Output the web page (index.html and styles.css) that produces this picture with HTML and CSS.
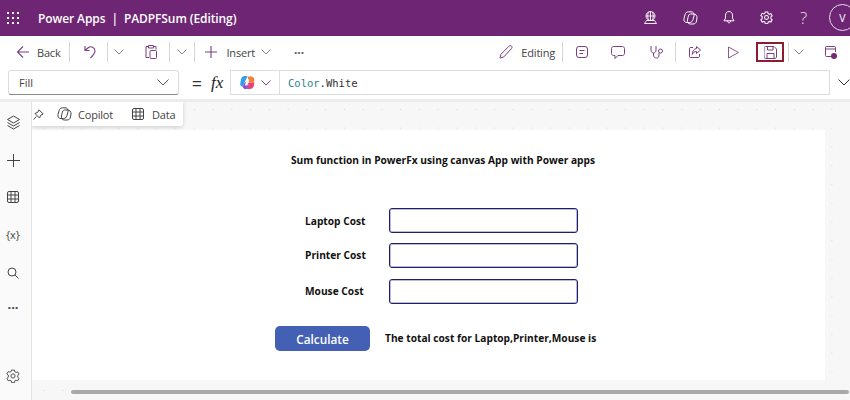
FILE: index.html
```html
<!DOCTYPE html>
<html lang="en">
<head>
    <meta charset="UTF-8">
    <title>Power Apps | PADPFSum (Editing)</title>
    <link rel="stylesheet" href="styles.css">
</head>
<body>
    <header class="topbar">
        <svg class="waffle" width="14" height="14" viewBox="0 0 14 14" fill="#fff">
            <rect x="1" y="1" width="2" height="2"/><rect x="6" y="1" width="2" height="2"/><rect x="11" y="1" width="2" height="2"/>
            <rect x="1" y="6" width="2" height="2"/><rect x="6" y="6" width="2" height="2"/><rect x="11" y="6" width="2" height="2"/>
            <rect x="1" y="11" width="2" height="2"/><rect x="6" y="11" width="2" height="2"/><rect x="11" y="11" width="2" height="2"/>
        </svg>
        <div class="app-title">Power Apps &nbsp;|&nbsp; PADPFSum (Editing)</div>
        <div class="top-icons">
            <svg class="globe-icon" width="13" height="13" viewBox="0 0 13 13" fill="none" stroke="#fff" stroke-width=".9"><circle cx="6.500" cy="5" r="4.500"/><path d="M2 5h9M6.500.5v9M4.500 1c-1 2-1 6 0 8M8.500 1c1 2 1 6 0 8M2.500 9.500h8l2 3H.5z"/></svg>
            <svg class="copilot-top" width="15" height="14" viewBox="0 0 15 14" fill="none" stroke="#fff"><path d="M5.500.8c-2 0-3 1.200-3.500 3L1 7.500c-.6 2.500.8 4 3 4h2.500c2 0 3-1.200 3.500-3l1-3.700C11.600 2.300 10 .8 8 .8z"/><path d="M7.500 3h2.800c2.500 0 4 1.800 3.700 4l-.5 3c-.3 2-1.700 3-3.500 3H7.500C5.500 13 4 11.500 4.500 9l.5-2.500C5.400 4.500 6 3 7.500 3z"/></svg>
            <svg class="bell-icon" width="12" height="13" viewBox="0 0 12 13" fill="none" stroke="#fff"><path d="M6 .5C3.800.5 2.500 2.200 2.500 4.200v3L1 9.800h10L9.500 7.200v-3C9.500 2.200 8.200.5 6 .5zM4.500 9.800c0 2.700 3 2.700 3 0"/></svg>
            <svg class="gear-icon" width="13" height="13" viewBox="0 0 20 20" fill="none" stroke="#fff" stroke-width="1.600"><circle cx="10" cy="10" r="3"/><path d="M8 1.500h4l.5 2.500 1.800 1 2.400-.9 2 3.400-2 1.600v2.800l2 1.600-2 3.400-2.400-.9-1.800 1-.5 2.500H8l-.5-2.500-1.800-1-2.400.9-2-3.400 2-1.600V8.600l-2-1.600 2-3.400 2.400.9 1.800-1z"/></svg>
            <span class="help">?</span>
            <span class="avatar">V</span>
        </div>
    </header>

    <nav class="toolbar">
        <svg class="back-icon" width="14" height="14" viewBox="0 0 14 14" fill="none" stroke="#7a3f80" stroke-width="1.100"><path d="M13 7H1.500M7 1.500 1.500 7 7 12.500"/></svg>
        <span class="tool-label back-label">Back</span>
        <i class="sep sep-back"></i>
        <svg class="undo-icon" width="12" height="14" viewBox="0 0 12 14" fill="none" stroke="#7a3f80" stroke-width="1.100"><path d="M1 1v4.500h4.500M1 5.500 4.500 2.500C7 .8 11 2.500 11 6c0 2.500-2 4.500-4.500 7"/></svg>
        <i class="sep sep-undo"></i>
        <svg class="chev-undo" width="10" height="6" viewBox="0 0 10 6" fill="none" stroke="#888"><path d="m.5.500 4.500 4.500L9.500.500"/></svg>
        <svg class="clip-icon" width="12" height="14" viewBox="0 0 12 14" fill="none" stroke="#7a3f80"><path d="M3.500 1.500H1v11h3M8.500 1.500H11v3M3.500.5h5v2.500h-5z"/><rect x="5" y="5.500" width="6.500" height="8" rx="1"/></svg>
        <i class="sep sep-clip"></i>
        <svg class="chev-clip" width="10" height="6" viewBox="0 0 10 6" fill="none" stroke="#888"><path d="m.5.500 4.500 4.500L9.500.500"/></svg>
        <i class="sep sep-clip2"></i>
        <svg class="plus-icon" width="12" height="12" viewBox="0 0 12 12" fill="none" stroke="#7a3f80" stroke-width="1.100"><path d="M6 0v12M0 6h12"/></svg>
        <span class="tool-label insert-label">Insert</span>
        <svg class="chev-insert" width="10" height="6" viewBox="0 0 10 6" fill="none" stroke="#888"><path d="m.5.500 4.500 4.500L9.500.500"/></svg>
        <span class="tool-dots">···</span>

        <div class="tool-right">
            <svg class="pencil-icon" width="14" height="14" viewBox="0 0 14 14" fill="none" stroke="#7a3f80"><path d="M1 13l1-3.800L10 1.200c.8-.8 1.900-.8 2.600 0 .6.700.6 1.700-.1 2.400L4.600 12z"/></svg>
            <span class="tool-label editing-label">Editing</span>
            <i class="sep sep-edit"></i>
            <svg class="notes-icon" width="12" height="12" viewBox="0 0 12 12" fill="none" stroke="#7a3f80"><rect x=".5" y=".5" width="11" height="11" rx="2.500"/><path d="M3.500 4.500h5M3.500 7.500h3.500"/></svg>
            <svg class="comment-icon" width="14" height="13" viewBox="0 0 14 13" fill="none" stroke="#7a3f80"><path d="M2.500.5h9c1 0 2 1 2 2v5c0 1-1 2-2 2H7l-3 3V9.500H2.500c-1 0-2-1-2-2v-5c0-1 1-2 2-2z"/></svg>
            <svg class="stetho-icon" width="14" height="14" viewBox="0 0 14 14" fill="none" stroke="#7a3f80"><path d="M1 1v4c0 2 1.300 3 2.500 3S6 7 6 5V1M3.500 8v2c0 2 1.300 3 3 3s2.500-1 2.500-3V8"/><circle cx="10.500" cy="6" r="2"/></svg>
            <i class="sep sep-stetho"></i>
            <svg class="share-icon" width="12" height="12" viewBox="0 0 12 12" fill="none" stroke="#7a3f80"><path d="M4 1.500H1.500c-.6 0-1 .4-1 1v8c0 .6.4 1 1 1h8c.6 0 1-.4 1-1V8"/><path d="M7.500.500 11.500 4 7.500 7.500V5.500C5.500 5.500 4 6.500 3.300 8.500 3.300 5 5 2.700 7.500 2.500z"/></svg>
            <svg class="play-icon" width="11" height="13" viewBox="0 0 11 13" fill="none" stroke="#8a5a90"><path d="M.5 1v11l10-5.500z"/></svg>
            <div class="save-box">
                <svg width="13" height="13" viewBox="0 0 13 13" fill="none" stroke="#7a3f80"><path d="M1.500.5h8.500l2.500 2.500v8c0 .8-.7 1.500-1.500 1.500h-9.500c-.8 0-1.500-.7-1.500-1.500v-9c0-.8.700-1.500 1.500-1.500z"/><path d="M3.500.5v3.500h5.500V.5M3 12.500V7.500h7v5"/></svg>
            </div>
            <i class="sep sep-save"></i>
            <svg class="chev-save" width="10" height="6" viewBox="0 0 10 6" fill="none" stroke="#888"><path d="m.5.500 4.500 4.500L9.500.500"/></svg>
            <svg class="publish-icon" width="12" height="14" viewBox="0 0 12 14" fill="none" stroke="#7a3f80"><path d="M6 11.500H1.500c-.6 0-1-.4-1-1v-8c0-.6.4-1 1-1h8c.6 0 1 .4 1 1V7M.5 4h10"/><circle cx="9" cy="11" r="3" fill="#742774" stroke="none"/></svg>
        </div>
    </nav>

    <div class="formula-bar">
        <div class="prop-select">
            <span>Fill</span>
            <svg width="12" height="7" viewBox="0 0 12 7" fill="none" stroke="#555"><path d="m.5.500 5.500 5.500L11.500.500"/></svg>
        </div>
        <span class="equals">=</span>
        <span class="fx">fx</span>
        <div class="formula-input">
            <div class="copilot-btn">
                <svg width="15" height="15" viewBox="0 0 15 15">
                    <path d="M4.500 1C2.500 1 1.500 2.500 1 4.500L.3 8C0 10 .8 11.500 2.500 11.500L7.500 1.500C6.500 1 5.500 1 4.500 1z" fill="#2f9fe8"/>
                    <path d="M7.500 1.500h3.500c1.800 0 3.400 1.300 3.400 3.500l-.4 2.500-5 .5z" fill="#f0803a"/>
                    <path d="M2.500 11.500C3 13.500 5 14.500 6.500 14l1-.5L9 8 5 7z" fill="#8a4fe0"/>
                    <path d="M9 8l5.400-.5-.4 2.500c-.4 2.500-2 4-4.500 4H7z" fill="#e8407c"/>
                    <path d="M6.500 4.500h2.700L7.500 10.500H4.800z" fill="#fdf3e6"/>
                </svg>
                <svg width="10" height="6" viewBox="0 0 10 6" fill="none" stroke="#7a3f80"><path d="m.5.500 4.500 4.500L9.500.500"/></svg>
            </div>
            <div class="formula-text"><span class="enum">Color</span>.White</div>
        </div>
        <svg class="expand" width="12" height="7" viewBox="0 0 12 7" fill="none" stroke="#333"><path d="m.5.500 5.500 5.500L11.500.500"/></svg>
    </div>

    <main class="workspace">
        <aside class="rail">
            <svg width="15" height="15" viewBox="0 0 15 15" fill="none" stroke="#444"><path d="M7.500 1 1.500 4.500l6 3.500 6-3.500zM1.500 7.500l6 3.500 6-3.500M1.500 10.500l6 3.500 6-3.500"/></svg>
            <svg width="13" height="13" viewBox="0 0 13 13" fill="none" stroke="#444"><path d="M6.500 0v13M0 6.500h13"/></svg>
            <svg width="12" height="12" viewBox="0 0 12 12" fill="none" stroke="#444"><rect x=".5" y=".5" width="11" height="11" rx="1.500"/><path d="M4 .5v11M8 .5v11M.5 4h11M.5 8h11"/></svg>
            <span class="vars">{x}</span>
            <svg width="12" height="12" viewBox="0 0 12 12" fill="none" stroke="#444"><circle cx="5" cy="5" r="4"/><path d="m8 8 3.500 3.500"/></svg>
            <span class="rail-dots">···</span>
            <svg class="rail-gear" width="14" height="14" viewBox="0 0 20 20" fill="none" stroke="#444" stroke-width="1.300"><circle cx="10" cy="10" r="3"/><path d="M8 1.500h4l.5 2.500 1.800 1 2.400-.9 2 3.400-2 1.600v2.800l2 1.600-2 3.400-2.400-.9-1.800 1-.5 2.500H8l-.5-2.500-1.800-1-2.400.9-2-3.400 2-1.600V8.600l-2-1.600 2-3.400 2.400.9 1.800-1z"/></svg>
        </aside>

        <section class="stage">
            <div class="artboard">
                <div class="screen-title">Sum function in PowerFx using canvas App with Power apps</div>
                <label class="field-label laptop-label">Laptop Cost</label>
                <div class="field laptop-field"></div>
                <label class="field-label printer-label">Printer Cost</label>
                <div class="field printer-field"></div>
                <label class="field-label mouse-label">Mouse Cost</label>
                <div class="field mouse-field"></div>
                <div class="calc-btn">Calculate</div>
                <div class="total-label">The total cost for Laptop,Printer,Mouse is</div>
            </div>
            <div class="float-menu">
                <svg width="11" height="11" viewBox="0 0 11 11" fill="none" stroke="#444"><path d="M6 .8 10.200 5 7.800 6.200 6.500 9 2 4.500l2.800-1.300zM3.500 7.500 .5 10.500"/></svg>
                <svg class="menu-copilot" width="15" height="14" viewBox="0 0 15 14" fill="none" stroke="#444"><path d="M5.500.8c-2 0-3 1.200-3.500 3L1 7.500c-.6 2.500.8 4 3 4h2.500c2 0 3-1.200 3.500-3l1-3.700C11.600 2.300 10 .8 8 .8z"/><path d="M7.500 3h2.800c2.500 0 4 1.800 3.700 4l-.5 3c-.3 2-1.700 3-3.500 3H7.500C5.500 13 4 11.500 4.500 9l.5-2.500C5.400 4.500 6 3 7.500 3z"/></svg>
                <span>Copilot</span>
                <svg class="menu-data" width="12" height="12" viewBox="0 0 12 12" fill="none" stroke="#444"><rect x=".5" y=".5" width="11" height="11" rx="1.500"/><path d="M4 .5v11M8 .5v11M.5 4h11M.5 8h11"/></svg>
                <span>Data</span>
            </div>
            <div class="scrollbar"></div>
        </section>
    </main>
</body>
</html>
```

FILE: styles.css
```css
html, body {
    margin: 0;
    padding: 0;
}
body {
    width: 850px;
    height: 400px;
    overflow: hidden;
    font-family: "Open Sans", "Noto Sans", Arial, sans-serif;
    background: #fff;
    color: #333;
}
svg {
    display: block;
    flex: none;
}

/* top purple bar */
.topbar {
    height: 36px;
    background: #6e2674;
    display: flex;
    align-items: center;
    color: #fff;
}
.waffle {
    margin-left: 6px;
}
.app-title {
    margin-left: 18px;
    font-size: 12px;
    font-weight: 600;
    letter-spacing: -0.1px;
    white-space: nowrap;
}
.top-icons {
    margin-left: auto;
    margin-bottom: 1px;
    display: flex;
    align-items: center;
}
.copilot-top { margin-left: 26px; }
.bell-icon { margin-left: 25px; }
.gear-icon { margin-left: 25px; }
.help {
    margin-left: 26px;
    width: 9px;
    font-size: 17px;
    font-weight: 300;
    line-height: 20px;
    text-align: center;
    opacity: 0.85;
}
.avatar {
    width: 25px;
    height: 25px;
    margin-left: 21px;
    margin-right: -6px;
    border: 1px solid #e8dcea;
    border-radius: 50%;
    display: flex;
    align-items: center;
    justify-content: center;
    font-size: 10.500px;
}

/* command bar */
.toolbar {
    height: 32px;
    display: flex;
    align-items: center;
    padding-left: 16px;
    background: #fff;
}
.tool-label {
    font-size: 11px;
    letter-spacing: -0.2px;
    color: #444;
}
.sep {
    display: block;
    width: 1px;
    height: 20px;
    background: #d6d6d6;
    flex: none;
}
.back-label { margin-left: 7px; }
.sep-back { margin-left: 9px; }
.undo-icon { margin-left: 14px; }
.sep-undo { margin-left: 11px; }
.chev-undo { margin-left: 6px; }
.clip-icon { margin-left: 21px; }
.sep-clip { margin-left: 12px; }
.chev-clip { margin-left: 7px; }
.sep-clip2 { margin-left: 7px; }
.plus-icon { margin-left: 10px; }
.insert-label { margin-left: 9px; }
.chev-insert { margin-left: 6px; }
.tool-dots {
    margin-left: 23px;
    font-size: 12px;
    font-weight: 700;
    color: #555;
}
.tool-right {
    margin-left: auto;
    display: flex;
    align-items: center;
    margin-right: 13px;
}
.editing-label { margin-left: 8px; }
.sep-edit { margin-left: 7px; }
.notes-icon { margin-left: 13px; }
.comment-icon { margin-left: 23px; }
.stetho-icon { margin-left: 25px; }
.sep-stetho { margin-left: 11px; }
.share-icon { margin-left: 13px; }
.play-icon { margin-left: 27px; }
.save-box {
    width: 24px;
    height: 16px;
    margin-left: 17px;
    border: 2px solid #8e1b2f;
    display: flex;
    align-items: center;
    justify-content: center;
}
.sep-save { margin-left: 4px; }
.chev-save { margin-left: 5px; }
.publish-icon { margin-left: 21px; }

/* formula bar */
.formula-bar {
    height: 29px;
    padding-bottom: 2px;
    display: flex;
    align-items: center;
    background: #fff;
    border-bottom: 3px solid #ececec;
}
.prop-select {
    width: 171px;
    height: 25px;
    margin-left: 8px;
    padding: 0 9px 0 10px;
    box-sizing: border-box;
    border: 1px solid #dcdcdc;
    border-bottom: 1px solid #8a8a8a;
    border-radius: 3px;
    display: flex;
    align-items: center;
    justify-content: space-between;
    font-size: 11px;
    color: #444;
}
.equals {
    width: 12px;
    margin-left: 12px;
    font-size: 18px;
    line-height: 1;
    color: #333;
    text-align: center;
}
.fx {
    margin-left: 8px;
    width: 14px;
    font-family: "Liberation Serif", serif;
    font-style: italic;
    font-size: 17px;
    color: #222;
}
.formula-input {
    margin-left: 5px;
    width: 600px;
    height: 25px;
    box-sizing: border-box;
    border: 1px solid #dedede;
    display: flex;
    align-items: center;
}
.copilot-btn {
    width: 48px;
    height: 100%;
    border-right: 1px solid #dedede;
    display: flex;
    align-items: center;
    justify-content: center;
    gap: 6px;
}
.formula-text {
    margin-left: 8px;
    font-family: "DejaVu Sans Mono", monospace;
    font-size: 10.500px;
    color: #333;
}
.enum {
    color: #2a7f8f;
}
.expand {
    margin-left: 8px;
}

/* left rail and canvas */
.workspace {
    height: 298px;
    display: flex;
}
.rail {
    width: 32px;
    box-sizing: border-box;
    padding: 13px 5px 0 0;
    background: #fafafa;
    border-right: 1px solid #e2e2e2;
    display: flex;
    flex-direction: column;
    align-items: center;
    gap: 24px;
}
.vars {
    font-size: 11px;
    line-height: 14px;
    margin: 1px 0;
    color: #444;
}
.rail-dots {
    font-size: 13px;
    font-weight: 700;
    line-height: 8px;
    color: #444;
}
.rail-gear {
    margin-top: 34px;
}
.stage {
    flex: 1;
    position: relative;
    background-color: #f7f7f7;
    background-image: radial-gradient(#d8d8d8 0.6px, transparent 0.8px);
    background-size: 18.750px 18.750px;
    background-position: 3px -2px;
    overflow: hidden;
}
.artboard {
    position: absolute;
    left: 0;
    top: 28px;
    width: 793px;
    height: 250px;
    background: #fff;
}
.screen-title,
.field-label,
.total-label {
    position: absolute;
    font-size: 10.200px;
    font-weight: 700;
    color: #111;
    white-space: nowrap;
}
.screen-title { left: 259px; top: 23px; }
.laptop-label { left: 273px; top: 84px; }
.printer-label { left: 273px; top: 118px; }
.mouse-label { left: 273px; top: 154px; }
.field {
    position: absolute;
    left: 357px;
    width: 189px;
    height: 25px;
    box-sizing: border-box;
    border: 1px solid #1e1e6e;
    box-shadow: inset 0 0 0 1px rgba(60, 60, 130, 0.35);
    border-radius: 3px;
    background: #fff;
}
.laptop-field { top: 78px; }
.printer-field { top: 113px; }
.mouse-field { top: 149px; }
.calc-btn {
    position: absolute;
    left: 243px;
    top: 196px;
    width: 95px;
    height: 25px;
    border-radius: 5px;
    background: #4460b4;
    color: #fff;
    font-size: 11.800px;
    font-weight: 600;
    display: flex;
    align-items: center;
    justify-content: center;
}
.total-label { left: 353px; top: 201px; }

/* floating tool menu over the canvas */
.float-menu {
    position: absolute;
    left: 0;
    top: 0;
    width: 151px;
    height: 24px;
    box-sizing: border-box;
    padding-left: 1px;
    background: #fff;
    box-shadow: 0 1px 4px rgba(0, 0, 0, 0.18);
    border-radius: 0 0 3px 0;
    display: flex;
    align-items: center;
    font-size: 11px;
    letter-spacing: -0.2px;
    color: #444;
}
.menu-copilot { margin: 0 6px 0 13px; }
.menu-data { margin: 0 8px 0 19px; }
.scrollbar {
    position: absolute;
    left: 39px;
    right: 1px;
    top: 288px;
    height: 4px;
    border-radius: 3px;
    background: #a9a9a9;
}
```
